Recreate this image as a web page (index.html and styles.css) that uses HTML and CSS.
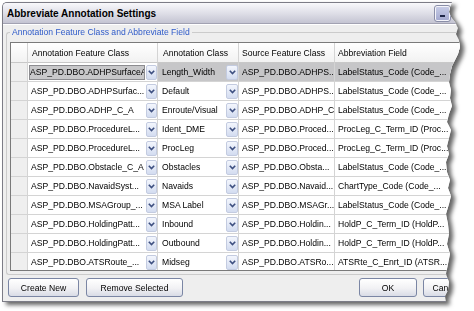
FILE: index.html
```html
<!DOCTYPE html>
<html>
<head>
<meta charset="utf-8">
<title>Abbreviate Annotation Settings</title>
<link rel="stylesheet" href="styles.css">
</head>
<body>
<div class="stage">
  <div class="window">
    <div class="titlebar">
      <span class="title">Abbreviate Annotation Settings</span>
      <span class="minbtn"><span class="dash"></span></span>
    </div>
    <div class="client">
      <fieldset class="group">
        <legend>Annotation Feature Class and Abbreviate Field</legend>
        <div class="grid">
          <div class="row head">
            <div class="c0"></div>
            <div class="c1">Annotation Feature Class</div>
            <div class="c2">Annotation Class</div>
            <div class="c3">Source Feature Class</div>
            <div class="c4">Abbreviation Field</div>
          </div>
          <div class="row sel">
            <div class="c0"></div>
            <div class="c1 dd"><span class="txt edit">ASP_PD.DBO.ADHPSurfaceAr</span><span class="ddb"><svg viewBox="0 0 7 5" width="7" height="5"><path d="M0.8 0.8 L3.5 3.6 L6.2 0.8" fill="none" stroke="#3d4f80" stroke-width="1.6"/></svg></span></div>
            <div class="c2 dd"><span class="txt">Length_Width</span><span class="ddb"><svg viewBox="0 0 7 5" width="7" height="5"><path d="M0.8 0.8 L3.5 3.6 L6.2 0.8" fill="none" stroke="#3d4f80" stroke-width="1.6"/></svg></span></div>
            <div class="c3">ASP_PD.DBO.ADHPS...</div>
            <div class="c4">LabelStatus_Code (Code_...</div>
          </div>
          <div class="row">
            <div class="c0"></div>
            <div class="c1 dd"><span class="txt">ASP_PD.DBO.ADHPSurfac...</span><span class="ddb"><svg viewBox="0 0 7 5" width="7" height="5"><path d="M0.8 0.8 L3.5 3.6 L6.2 0.8" fill="none" stroke="#3d4f80" stroke-width="1.6"/></svg></span></div>
            <div class="c2 dd"><span class="txt">Default</span><span class="ddb"><svg viewBox="0 0 7 5" width="7" height="5"><path d="M0.8 0.8 L3.5 3.6 L6.2 0.8" fill="none" stroke="#3d4f80" stroke-width="1.6"/></svg></span></div>
            <div class="c3">ASP_PD.DBO.ADHPS...</div>
            <div class="c4">LabelStatus_Code (Code_...</div>
          </div>
          <div class="row">
            <div class="c0"></div>
            <div class="c1 dd"><span class="txt">ASP_PD.DBO.ADHP_C_A</span><span class="ddb"><svg viewBox="0 0 7 5" width="7" height="5"><path d="M0.8 0.8 L3.5 3.6 L6.2 0.8" fill="none" stroke="#3d4f80" stroke-width="1.6"/></svg></span></div>
            <div class="c2 dd"><span class="txt">Enroute/Visual</span><span class="ddb"><svg viewBox="0 0 7 5" width="7" height="5"><path d="M0.8 0.8 L3.5 3.6 L6.2 0.8" fill="none" stroke="#3d4f80" stroke-width="1.6"/></svg></span></div>
            <div class="c3">ASP_PD.DBO.ADHP_C</div>
            <div class="c4">LabelStatus_Code (Code_...</div>
          </div>
          <div class="row">
            <div class="c0"></div>
            <div class="c1 dd"><span class="txt">ASP_PD.DBO.ProcedureL...</span><span class="ddb"><svg viewBox="0 0 7 5" width="7" height="5"><path d="M0.8 0.8 L3.5 3.6 L6.2 0.8" fill="none" stroke="#3d4f80" stroke-width="1.6"/></svg></span></div>
            <div class="c2 dd"><span class="txt">Ident_DME</span><span class="ddb"><svg viewBox="0 0 7 5" width="7" height="5"><path d="M0.8 0.8 L3.5 3.6 L6.2 0.8" fill="none" stroke="#3d4f80" stroke-width="1.6"/></svg></span></div>
            <div class="c3">ASP_PD.DBO.Proced...</div>
            <div class="c4">ProcLeg_C_Term_ID (Proc...</div>
          </div>
          <div class="row">
            <div class="c0"></div>
            <div class="c1 dd"><span class="txt">ASP_PD.DBO.ProcedureL...</span><span class="ddb"><svg viewBox="0 0 7 5" width="7" height="5"><path d="M0.8 0.8 L3.5 3.6 L6.2 0.8" fill="none" stroke="#3d4f80" stroke-width="1.6"/></svg></span></div>
            <div class="c2 dd"><span class="txt">ProcLeg</span><span class="ddb"><svg viewBox="0 0 7 5" width="7" height="5"><path d="M0.8 0.8 L3.5 3.6 L6.2 0.8" fill="none" stroke="#3d4f80" stroke-width="1.6"/></svg></span></div>
            <div class="c3">ASP_PD.DBO.Proced...</div>
            <div class="c4">ProcLeg_C_Term_ID (Proc...</div>
          </div>
          <div class="row">
            <div class="c0"></div>
            <div class="c1 dd"><span class="txt">ASP_PD.DBO.Obstacle_C_A</span><span class="ddb"><svg viewBox="0 0 7 5" width="7" height="5"><path d="M0.8 0.8 L3.5 3.6 L6.2 0.8" fill="none" stroke="#3d4f80" stroke-width="1.6"/></svg></span></div>
            <div class="c2 dd"><span class="txt">Obstacles</span><span class="ddb"><svg viewBox="0 0 7 5" width="7" height="5"><path d="M0.8 0.8 L3.5 3.6 L6.2 0.8" fill="none" stroke="#3d4f80" stroke-width="1.6"/></svg></span></div>
            <div class="c3">ASP_PD.DBO.Obsta...</div>
            <div class="c4">LabelStatus_Code (Code_...</div>
          </div>
          <div class="row">
            <div class="c0"></div>
            <div class="c1 dd"><span class="txt">ASP_PD.DBO.NavaidSyst...</span><span class="ddb"><svg viewBox="0 0 7 5" width="7" height="5"><path d="M0.8 0.8 L3.5 3.6 L6.2 0.8" fill="none" stroke="#3d4f80" stroke-width="1.6"/></svg></span></div>
            <div class="c2 dd"><span class="txt">Navaids</span><span class="ddb"><svg viewBox="0 0 7 5" width="7" height="5"><path d="M0.8 0.8 L3.5 3.6 L6.2 0.8" fill="none" stroke="#3d4f80" stroke-width="1.6"/></svg></span></div>
            <div class="c3">ASP_PD.DBO.Navaid...</div>
            <div class="c4">ChartType_Code (Code_...</div>
          </div>
          <div class="row">
            <div class="c0"></div>
            <div class="c1 dd"><span class="txt">ASP_PD.DBO.MSAGroup_...</span><span class="ddb"><svg viewBox="0 0 7 5" width="7" height="5"><path d="M0.8 0.8 L3.5 3.6 L6.2 0.8" fill="none" stroke="#3d4f80" stroke-width="1.6"/></svg></span></div>
            <div class="c2 dd"><span class="txt">MSA Label</span><span class="ddb"><svg viewBox="0 0 7 5" width="7" height="5"><path d="M0.8 0.8 L3.5 3.6 L6.2 0.8" fill="none" stroke="#3d4f80" stroke-width="1.6"/></svg></span></div>
            <div class="c3">ASP_PD.DBO.MSAGr...</div>
            <div class="c4">LabelStatus_Code (Code_...</div>
          </div>
          <div class="row">
            <div class="c0"></div>
            <div class="c1 dd"><span class="txt">ASP_PD.DBO.HoldingPatt...</span><span class="ddb"><svg viewBox="0 0 7 5" width="7" height="5"><path d="M0.8 0.8 L3.5 3.6 L6.2 0.8" fill="none" stroke="#3d4f80" stroke-width="1.6"/></svg></span></div>
            <div class="c2 dd"><span class="txt">Inbound</span><span class="ddb"><svg viewBox="0 0 7 5" width="7" height="5"><path d="M0.8 0.8 L3.5 3.6 L6.2 0.8" fill="none" stroke="#3d4f80" stroke-width="1.6"/></svg></span></div>
            <div class="c3">ASP_PD.DBO.Holdin...</div>
            <div class="c4">HoldP_C_Term_ID (HoldP...</div>
          </div>
          <div class="row">
            <div class="c0"></div>
            <div class="c1 dd"><span class="txt">ASP_PD.DBO.HoldingPatt...</span><span class="ddb"><svg viewBox="0 0 7 5" width="7" height="5"><path d="M0.8 0.8 L3.5 3.6 L6.2 0.8" fill="none" stroke="#3d4f80" stroke-width="1.6"/></svg></span></div>
            <div class="c2 dd"><span class="txt">Outbound</span><span class="ddb"><svg viewBox="0 0 7 5" width="7" height="5"><path d="M0.8 0.8 L3.5 3.6 L6.2 0.8" fill="none" stroke="#3d4f80" stroke-width="1.6"/></svg></span></div>
            <div class="c3">ASP_PD.DBO.Holdin...</div>
            <div class="c4">HoldP_C_Term_ID (HoldP...</div>
          </div>
          <div class="row">
            <div class="c0"></div>
            <div class="c1 dd"><span class="txt">ASP_PD.DBO.ATSRoute_...</span><span class="ddb"><svg viewBox="0 0 7 5" width="7" height="5"><path d="M0.8 0.8 L3.5 3.6 L6.2 0.8" fill="none" stroke="#3d4f80" stroke-width="1.6"/></svg></span></div>
            <div class="c2 dd"><span class="txt">Midseg</span><span class="ddb"><svg viewBox="0 0 7 5" width="7" height="5"><path d="M0.8 0.8 L3.5 3.6 L6.2 0.8" fill="none" stroke="#3d4f80" stroke-width="1.6"/></svg></span></div>
            <div class="c3">ASP_PD.DBO.ATSRo...</div>
            <div class="c4">ATSRte_C_Enrt_ID (ATSR...</div>
          </div>
        </div>
      </fieldset>
      <div class="buttons">
        <button class="btn w-create">Create New</button>
        <button class="btn w-remove">Remove Selected</button>
        <button class="btn w-ok">OK</button>
        <button class="btn w-cancel">Cancel</button>
      </div>
    </div>
  </div>
</div>
</body>
</html>
```
FILE: styles.css
```css
html, body {
  margin: 0;
  padding: 0;
  width: 474px;
  height: 311px;
  overflow: hidden;
  background: #ffffff;
}
body {
  font-family: "Liberation Sans", Arial, sans-serif;
  font-size: 8.6px;
  color: #000;
}
.stage {
  padding: 2px 0 0 2px;
  filter: drop-shadow(4px 3px 2px rgba(0, 0, 0, 0.6));
}
.window {
  width: 472px;
  height: 300px;
  box-sizing: border-box;
  border: 1px solid #7c7c86;
  border-right: none;
  border-radius: 5px 0 0 0;
  background: #eeeeee;
  overflow: hidden;
  display: flex;
  flex-direction: column;
  clip-path: polygon(0px 0px, 450px 0px, 448px 5px, 447px 10px, 449px 15px, 453px 20px, 456px 26px, 454px 32px, 457px 38px, 458px 45px, 456px 52px, 453px 58px, 450px 64px, 448px 72px, 447px 80px, 449px 88px, 448px 96px, 450px 104px, 447px 112px, 445px 120px, 449px 128px, 447px 136px, 445px 144px, 447px 152px, 444px 160px, 445px 170px, 448px 178px, 446px 186px, 449px 194px, 447px 202px, 444px 212px, 446px 222px, 447px 232px, 445px 242px, 448px 252px, 446px 262px, 444px 272px, 447px 280px, 446px 288px, 443px 294px, 444px 300px, 0px 300px);
}
.titlebar {
  height: 21px;
  flex: none;
  box-sizing: border-box;
  display: flex;
  align-items: center;
  padding: 0 24px 0 4px;
  background: linear-gradient(#f8f8fb, #e2e2ea 45%, #c4c4d2);
  border-bottom: 1px solid #a2a2b2;
}
.title {
  font-weight: bold;
  font-size: 10px;
}
.minbtn {
  margin-left: auto;
  width: 15px;
  height: 15px;
  box-sizing: border-box;
  border: 1px solid #f4f4fa;
  outline: 1px solid #8a8ea8;
  border-radius: 2px;
  background: linear-gradient(#c6cbe6, #a4aad0);
  display: flex;
  align-items: flex-end;
  justify-content: center;
  padding-bottom: 3px;
}
.dash {
  width: 5px;
  height: 2px;
  background: #1d2547;
}
.client {
  flex: 1;
  border-top: 1px solid #ffffff;
  padding: 0 0 0 3px;
  display: flex;
  flex-direction: column;
}
.group {
  margin: 2px 0 0 0;
  padding: 5px 0 3px 3px;
  border: 1px solid #cbcbcb;
  border-right: none;
  border-radius: 3px 0 0 3px;
  min-width: 0;
}
.group legend {
  padding: 0 2px;
  line-height: 10px;
  color: #2f5bc9;
}
.grid {
  height: 229px;
  box-sizing: border-box;
  border: 1px solid #7a7a7a;
  border-right: none;
  background: #ffffff;
  overflow: hidden;
}
.row {
  display: flex;
  height: 19px;
  white-space: nowrap;
}
.row > div {
  box-sizing: border-box;
  height: 19px;
  border-right: 1px solid #d4d4d4;
  border-bottom: 1px solid #d4d4d4;
  display: flex;
  align-items: center;
  overflow: hidden;
  flex: none;
}
.row.head, .row.head > div { height: 20px; }
.c0 { width: 17px; background: #efefef; }
.c1 { width: 130px; padding-left: 3px; }
.c2 { width: 81px; padding-left: 4px; }
.c3 { width: 96px; padding-left: 3px; }
.c4 { width: 160px; padding-left: 3px; }
.head > div {
  background: linear-gradient(#ffffff, #f2f2f2);
  border-bottom-color: #c8c8c8;
}
.head .c1 { padding-left: 4px; }
.head .c2 { padding-left: 5px; }
.sel .c2, .sel .c3, .sel .c4 { background: #c6c6c8; }
.dd .txt {
  flex: 1;
  overflow: hidden;
}
.txt.edit {
  background: #c8c8ca;
  outline: 1px solid #8c8c90;
  line-height: 13px;
  margin-right: 2px;
}
.sel .c1 { padding-left: 2px; }
.ddb {
  flex: none;
  width: 11px;
  height: 15px;
  box-sizing: border-box;
  border: 1px solid #c3cbe0;
  border-radius: 2px;
  background: linear-gradient(#f3f6fd, #d3dcf0);
  display: flex;
  align-items: center;
  justify-content: center;
}
.c2 .ddb { width: 12px; }
.buttons {
  display: flex;
  gap: 7px;
  margin: 3px 0 0 2px;
  white-space: nowrap;
}
.btn {
  flex: none;
  height: 19px;
  box-sizing: border-box;
  border: 1px solid #7b86a4;
  border-radius: 3px;
  background: linear-gradient(#ffffff, #f1f1f4 55%, #d9dce6);
  font-family: "Liberation Sans", Arial, sans-serif;
  font-size: 8.6px;
  color: #000;
  padding: 0;
}
.w-create { width: 71px; }
.w-remove { width: 97px; }
.w-ok { width: 58px; margin-left: 169px; }
.w-cancel { width: 46px; margin-left: -1px; }
```
